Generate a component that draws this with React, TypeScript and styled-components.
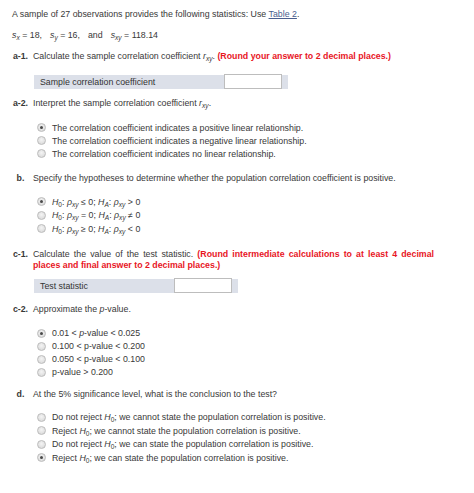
import React from "react";
import styled, { createGlobalStyle } from "styled-components";

const Global = createGlobalStyle`
  html, body { margin: 0; padding: 0; background: #ffffff; }
  body {
    font-family: "Liberation Sans", Arial, sans-serif;
    font-size: 8.8px;
    color: #383838;
  }
`;

const Page = styled.div`
  width: 474px;
  height: 493px;
  box-sizing: border-box;
  padding: 9px 0 0 12px;
  overflow: hidden;
`;

const Para = styled.div<{ $mt?: number }>`
  line-height: 11px;
  margin-top: ${(p) => p.$mt ?? 0}px;
  white-space: nowrap;
`;

const Link = styled.a`
  color: #4a5f8f;
  text-decoration: underline;
`;

const I = styled.i`
  font-style: italic;
`;

const Sub = styled.sub`
  font-size: 0.75em;
  vertical-align: -0.3em;
  line-height: 0;
`;

const Gap = styled.span<{ $w: number }>`
  display: inline-block;
  width: ${(p) => p.$w}px;
`;

const Question = styled.div<{ $mt: number }>`
  display: flex;
  margin-top: ${(p) => p.$mt}px;
`;

const Label = styled.div`
  width: 17px;
  flex: none;
  text-align: center;
  font-weight: bold;
  line-height: 11px;
  margin-right: 4px;
`;

const Body = styled.div`
  flex: 1;
  min-width: 0;
`;

const Indented = styled.div`
  margin-left: 22px;
`;

const Prompt = styled.div<{ $w?: number }>`
  line-height: 11px;
  width: ${(p) => (p.$w ? `${p.$w}px` : "auto")};
  white-space: ${(p) => (p.$w ? "normal" : "nowrap")};
  text-align: ${(p) => (p.$w ? "justify" : "left")};
`;

const Red = styled.span`
  color: #e8161f;
  font-weight: bold;
`;

const AnswerBar = styled.div<{ $w: number; $mt: number }>`
  display: flex;
  align-items: center;
  justify-content: space-between;
  box-sizing: border-box;
  width: ${(p) => p.$w}px;
  height: 14px;
  margin-top: ${(p) => p.$mt}px;
  padding: 0 6px 0 6px;
  background: #dce0e9;
`;

const BarLabel = styled.span`
  color: #333;
`;

const AnswerBox = styled.div`
  box-sizing: border-box;
  width: 58px;
  height: 15px;
  margin: -1px 0 0;
  background: #ffffff;
  border: 1px solid #bdbdbd;
`;

const RadioList = styled.div<{ $mt: number }>`
  display: flex;
  flex-direction: column;
  margin-top: ${(p) => p.$mt}px;
  padding-left: 4px;
`;

const RadioRow = styled.div<{ $h: number }>`
  display: flex;
  align-items: center;
  height: ${(p) => p.$h}px;
  white-space: nowrap;
`;

const Radio = styled.span<{ $on?: boolean }>`
  position: relative;
  flex: none;
  box-sizing: border-box;
  width: 9px;
  height: 9px;
  margin-right: 6px;
  border-radius: 50%;
  border: 1px solid #bcbcbc;
  background: radial-gradient(circle at 50% 40%, #f4f4f4 0%, #dedede 70%, #d2d2d2 100%);
  &::after {
    content: "";
    display: ${(p) => (p.$on ? "block" : "none")};
    position: absolute;
    left: 50%;
    top: 50%;
    width: 3px;
    height: 3px;
    margin: -1.5px 0 0 -1.5px;
    border-radius: 50%;
    background: #4a4a4a;
  }
`;

type Opt = { content: React.ReactNode; on?: boolean };

const Options: React.FC<{ opts: Opt[]; mt: number; h: number }> = ({ opts, mt, h }) => (
  <RadioList $mt={mt}>
    {opts.map((o, i) => (
      <RadioRow key={i} $h={h}>
        <Radio $on={o.on} />
        <span>{o.content}</span>
      </RadioRow>
    ))}
  </RadioList>
);

const H0 = () => (
  <>
    <I>H</I>
    <Sub>0</Sub>
  </>
);
const HA = () => (
  <>
    <I>H</I>
    <Sub>
      <I>A</I>
    </Sub>
  </>
);
const Rho = () => (
  <>
    <I>ρ</I>
    <Sub>
      <I>xy</I>
    </Sub>
  </>
);

export default function App() {
  return (
    <Page>
      <Global />
      <Para>
        A sample of 27 observations provides the following statistics: Use <Link>Table 2</Link>.
      </Para>
      <Para $mt={10}>
        <I>s</I>
        <Sub>
          <I>x</I>
        </Sub>{" "}
        = 18,
        <Gap $w={8} />
        <I>s</I>
        <Sub>
          <I>y</I>
        </Sub>{" "}
        = 16,
        <Gap $w={8} />
        and
        <Gap $w={8} />
        <I>s</I>
        <Sub>
          <I>xy</I>
        </Sub>{" "}
        = 118.14
      </Para>

      <Question $mt={10}>
        <Label>a-1.</Label>
        <Body>
          <Prompt>
            Calculate the sample correlation coefficient <I>r</I>
            <Sub>
              <I>xy</I>
            </Sub>
            . <Red>(Round your answer to 2 decimal places.)</Red>
          </Prompt>
        </Body>
      </Question>
      <Indented>
        <AnswerBar $w={254} $mt={13}>
          <BarLabel>Sample correlation coefficient</BarLabel>
          <AnswerBox />
        </AnswerBar>
      </Indented>

      <Question $mt={9}>
        <Label>a-2.</Label>
        <Body>
          <Prompt>
            Interpret the sample correlation coefficient <I>r</I>
            <Sub>
              <I>xy</I>
            </Sub>
            .
          </Prompt>
          <Options
            mt={12}
            h={13}
            opts={[
              { content: "The correlation coefficient indicates a positive linear relationship.", on: true },
              { content: "The correlation coefficient indicates a negative linear relationship." },
              { content: "The correlation coefficient indicates no linear relationship." },
            ]}
          />
        </Body>
      </Question>

      <Question $mt={13}>
        <Label>b.</Label>
        <Body>
          <Prompt>Specify the hypotheses to determine whether the population correlation coefficient is positive.</Prompt>
          <Options
            mt={11}
            h={13.5}
            opts={[
              {
                on: true,
                content: (
                  <>
                    <H0 />: <Rho /> ≤ 0; <HA />: <Rho /> &gt; 0
                  </>
                ),
              },
              {
                content: (
                  <>
                    <H0 />: <Rho /> = 0; <HA />: <Rho /> ≠ 0
                  </>
                ),
              },
              {
                content: (
                  <>
                    <H0 />: <Rho /> ≥ 0; <HA />: <Rho /> &lt; 0
                  </>
                ),
              },
            ]}
          />
        </Body>
      </Question>

      <Question $mt={13}>
        <Label>c-1.</Label>
        <Body>
          <Prompt $w={401}>
            Calculate the value of the test statistic.{" "}
            <Red>(Round intermediate calculations to at least 4 decimal places and final answer to 2 decimal places.)</Red>
          </Prompt>
        </Body>
      </Question>
      <Indented>
        <AnswerBar $w={204} $mt={8}>
          <BarLabel>Test statistic</BarLabel>
          <AnswerBox />
        </AnswerBar>
      </Indented>

      <Question $mt={11}>
        <Label>c-2.</Label>
        <Body>
          <Prompt>
            Approximate the <I>p</I>-value.
          </Prompt>
          <Options
            mt={12}
            h={13}
            opts={[
              {
                on: true,
                content: (
                  <>
                    0.01 &lt; <I>p</I>-value &lt; 0.025
                  </>
                ),
              },
              { content: "0.100 < p-value < 0.200" },
              { content: "0.050 < p-value < 0.100" },
              { content: "p-value > 0.200" },
            ]}
          />
        </Body>
      </Question>

      <Question $mt={10}>
        <Label>d.</Label>
        <Body>
          <Prompt>At the 5% significance level, what is the conclusion to the test?</Prompt>
          <Options
            mt={11}
            h={13.5}
            opts={[
              {
                content: (
                  <>
                    Do not reject <H0 />; we cannot state the population correlation is positive.
                  </>
                ),
              },
              {
                content: (
                  <>
                    Reject <H0 />; we cannot state the population correlation is positive.
                  </>
                ),
              },
              {
                content: (
                  <>
                    Do not reject <H0 />; we can state the population correlation is positive.
                  </>
                ),
              },
              {
                on: true,
                content: (
                  <>
                    Reject <H0 />; we can state the population correlation is positive.
                  </>
                ),
              },
            ]}
          />
        </Body>
      </Question>
    </Page>
  );
}
